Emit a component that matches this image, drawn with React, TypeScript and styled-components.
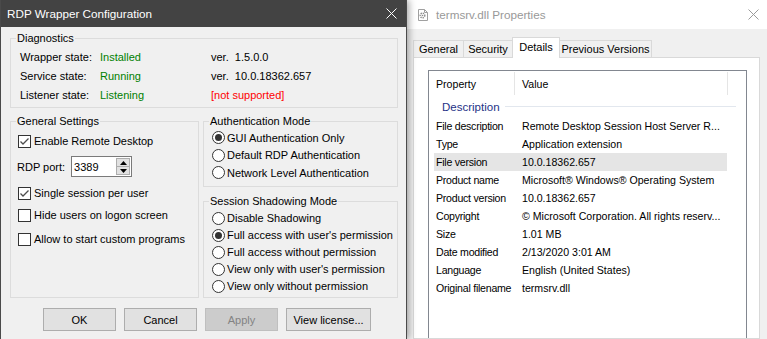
import React from 'react';
import styled, { createGlobalStyle } from 'styled-components';

const GlobalStyle = createGlobalStyle`
    * {
        box-sizing: border-box;
    }
    html,
    body {
        margin: 0;
        padding: 0;
    }
    body {
        background: #f0f0f0;
        font-family: 'Liberation Sans', Arial, sans-serif;
        font-size: 11px;
        color: #000;
        overflow: hidden;
    }
`;

const diagnostics = [
    { label: 'Wrapper state:', state: 'Installed', version: 'ver.  1.5.0.0', bad: false },
    { label: 'Service state:', state: 'Running', version: 'ver.  10.0.18362.657', bad: false },
    { label: 'Listener state:', state: 'Listening', version: '[not supported]', bad: true },
];

const authModes = [
    { label: 'GUI Authentication Only', on: true },
    { label: 'Default RDP Authentication', on: false },
    { label: 'Network Level Authentication', on: false },
];

const shadowModes = [
    { label: 'Disable Shadowing', on: false },
    { label: "Full access with user's permission", on: true },
    { label: 'Full access without permission', on: false },
    { label: "View only with user's permission", on: false },
    { label: 'View only without permission', on: false },
];

const details = [
    { name: 'File description', value: 'Remote Desktop Session Host Server R...' },
    { name: 'Type', value: 'Application extension' },
    { name: 'File version', value: '10.0.18362.657', selected: true },
    { name: 'Product name', value: 'Microsoft® Windows® Operating System' },
    { name: 'Product version', value: '10.0.18362.657' },
    { name: 'Copyright', value: '© Microsoft Corporation. All rights reserv...' },
    { name: 'Size', value: '1.01 MB' },
    { name: 'Date modified', value: '2/13/2020 3:01 AM' },
    { name: 'Language', value: 'English (United States)' },
    { name: 'Original filename', value: 'termsrv.dll' },
];

const tabs = ['General', 'Security', 'Details', 'Previous Versions'];
const tabWidths = [51, 50, 48, 93];

const CloseIcon: React.FC<{ color: string }> = ({ color }) => (
    <svg width="11" height="11" viewBox="0 0 11 11">
        <path d="M0.5 0.5 L10.5 10.5 M10.5 0.5 L0.5 10.5" stroke={color} strokeWidth="1" />
    </svg>
);

const Check: React.FC<{ checked: boolean }> = ({ checked }) => (
    <CheckBox>
        {checked && (
            <svg width="11" height="11" viewBox="0 0 11 11">
                <path d="M1.5 5.5 L4 8 L9.5 2.5" stroke="#4d4d4d" strokeWidth="1.3" fill="none" />
            </svg>
        )}
    </CheckBox>
);

const DllIcon = () => (
    <svg width="12" height="12" viewBox="0 0 12 12">
        <path d="M1.5 0.5 H7.5 L10.5 3.5 V11.5 H1.5 Z" fill="#fff" stroke="#a0a0a0" />
        <path d="M7.5 0.5 V3.5 H10.5" fill="none" stroke="#a0a0a0" />
        <circle cx="5.5" cy="6.5" r="2.3" fill="none" stroke="#8a8a8a" strokeWidth="1.4" strokeDasharray="1.2 0.8" />
        <circle cx="5.5" cy="6.5" r="0.8" fill="#8a8a8a" />
    </svg>
);

export default function App() {
    return (
        <>
            <GlobalStyle />
            <Screen>
                <Dialog>
                    <TitleBar>
                        <span>RDP Wrapper Configuration</span>
                        <CloseIcon color="#fff" />
                    </TitleBar>
                    <DialogBody>
                        <Group>
                            <Legend>Diagnostics</Legend>
                            <DiagGrid>
                                {diagnostics.map((d) => (
                                    <React.Fragment key={d.label}>
                                        <span>{d.label}</span>
                                        <Status>{d.state}</Status>
                                        <Version $bad={d.bad}>{d.version}</Version>
                                    </React.Fragment>
                                ))}
                            </DiagGrid>
                        </Group>
                        <Columns>
                            <SettingsGroup>
                                <Legend>General Settings</Legend>
                                <SettingsBody>
                                    <CheckRow $mt={4}>
                                        <Check checked />
                                        Enable Remote Desktop
                                    </CheckRow>
                                    <PortRow>
                                        <span>RDP port:</span>
                                        <PortInput>
                                            <PortValue>3389</PortValue>
                                            <Spin>
                                                <SpinButton>
                                                    <svg width="7" height="4" viewBox="0 0 7 4">
                                                        <path d="M0 4 L3.5 0 L7 4 Z" fill="#000" />
                                                    </svg>
                                                </SpinButton>
                                                <SpinButton>
                                                    <svg width="7" height="4" viewBox="0 0 7 4">
                                                        <path d="M0 0 L3.5 4 L7 0 Z" fill="#000" />
                                                    </svg>
                                                </SpinButton>
                                            </Spin>
                                        </PortInput>
                                    </PortRow>
                                    <CheckRow $mt={7}>
                                        <Check checked />
                                        Single session per user
                                    </CheckRow>
                                    <CheckRow $mt={4}>
                                        <Check checked={false} />
                                        Hide users on logon screen
                                    </CheckRow>
                                    <CheckRow $mt={6}>
                                        <Check checked={false} />
                                        Allow to start custom programs
                                    </CheckRow>
                                </SettingsBody>
                            </SettingsGroup>
                            <RightColumn>
                                <Group>
                                    <Legend>Authentication Mode</Legend>
                                    <RadioList $pt={1} $pb={4}>
                                        {authModes.map((m) => (
                                            <RadioRow key={m.label} $h={17.5}>
                                                <Radio $on={m.on} />
                                                {m.label}
                                            </RadioRow>
                                        ))}
                                    </RadioList>
                                </Group>
                                <ShadowGroup>
                                    <Legend>Session Shadowing Mode</Legend>
                                    <RadioList $pt={1.5} $pb={2}>
                                        {shadowModes.map((m) => (
                                            <RadioRow key={m.label} $h={17}>
                                                <Radio $on={m.on} />
                                                {m.label}
                                            </RadioRow>
                                        ))}
                                    </RadioList>
                                </ShadowGroup>
                            </RightColumn>
                        </Columns>
                        <ButtonRow>
                            <Button $w={73}>OK</Button>
                            <Button $w={73}>Cancel</Button>
                            <Button $w={73} disabled>
                                Apply
                            </Button>
                            <Button $w={85}>View license...</Button>
                        </ButtonRow>
                    </DialogBody>
                </Dialog>

                <PropWindow>
                    <PropTitle>
                        <TitleLeft>
                            <DllIcon />
                            <span>termsrv.dll Properties</span>
                        </TitleLeft>
                        <CloseIcon color="#9a9a9a" />
                    </PropTitle>
                    <TabStrip>
                        {tabs.map((t, i) => (
                            <Tab key={t} $active={t === 'Details'} style={{ width: tabWidths[i] }}>
                                {t}
                            </Tab>
                        ))}
                    </TabStrip>
                    <TabPanel>
                        <ListView>
                            <ListHeader>
                                <HeaderCell $w={86}>Property</HeaderCell>
                                <HeaderCell $w={213}>Value</HeaderCell>
                            </ListHeader>
                            <GroupHeader>
                                <span>Description</span>
                                <GroupLine />
                            </GroupHeader>
                            {details.map((d) => (
                                <DetailRow key={d.name} $selected={!!d.selected}>
                                    <DetailName>{d.name}</DetailName>
                                    <DetailValue>{d.value}</DetailValue>
                                </DetailRow>
                            ))}
                        </ListView>
                    </TabPanel>
                </PropWindow>
            </Screen>
        </>
    );
}

const Screen = styled.div`
    display: flex;
    width: 767px;
    height: 339px;
    overflow: hidden;
`;

const Dialog = styled.div`
    position: relative;
    z-index: 2;
    flex: 0 0 407px;
    display: flex;
    flex-direction: column;
    background: #f0f0f0;
    border-left: 1px solid #4a4a4a;
    border-right: 1px solid #4a4a4a;
    box-shadow: 2px 0 7px rgba(0, 0, 0, 0.35);
`;

const TitleBar = styled.div`
    height: 27px;
    flex: 0 0 27px;
    background: #434343;
    color: #fff;
    font-size: 11.7px;
    display: flex;
    align-items: center;
    justify-content: space-between;
    padding: 0 9px 0 6px;
`;

const DialogBody = styled.div`
    padding: 4px 8px 0 9px;
    display: flex;
    flex-direction: column;
`;

const Group = styled.fieldset`
    margin: 0;
    padding: 0;
    min-width: 0;
    border: 1px solid #dcdcdc;
`;

const Legend = styled.legend`
    margin-left: 5px;
    padding: 0 1px;
    line-height: 14px;
`;

const DiagGrid = styled.div`
    display: grid;
    grid-template-columns: 80px 111px 1fr;
    grid-auto-rows: 19px;
    align-items: center;
    padding: 2px 0 3px 9px;
    white-space: pre;
`;

const Status = styled.span`
    color: #008000;
`;

const Version = styled.span<{ $bad: boolean }>`
    color: ${(p) => (p.$bad ? '#ff0000' : '#000')};
`;

const Columns = styled.div`
    display: flex;
    gap: 4px;
    margin-top: 6px;
`;

const SettingsGroup = styled(Group)`
    flex: 0 0 189px;
`;

const SettingsBody = styled.div`
    display: flex;
    flex-direction: column;
    padding-left: 7px;
`;

const CheckRow = styled.div<{ $mt: number }>`
    display: flex;
    align-items: center;
    gap: 3px;
    height: 18px;
    margin-top: ${(p) => p.$mt}px;
    white-space: nowrap;
`;

const CheckBox = styled.span`
    width: 13px;
    height: 13px;
    flex: 0 0 13px;
    border: 1px solid #333;
    background: #fff;
    display: flex;
    align-items: center;
    justify-content: center;
`;

const PortRow = styled.div`
    display: flex;
    align-items: center;
    gap: 6px;
    height: 21px;
    margin-top: 6px;
    margin-left: -1px;
`;

const PortInput = styled.div`
    width: 61px;
    height: 21px;
    border: 1px solid #7a7a7a;
    background: #fff;
    display: flex;
    align-items: center;
    padding: 1px 1px 1px 2px;
`;

const PortValue = styled.span`
    flex: 1;
`;

const Spin = styled.div`
    width: 14px;
    height: 17px;
    display: flex;
    flex-direction: column;
    border: 1px solid #adadad;
`;

const SpinButton = styled.div`
    flex: 1;
    background: #e1e1e1;
    display: flex;
    align-items: center;
    justify-content: center;

    & + & {
        border-top: 1px solid #adadad;
    }
`;

const RightColumn = styled.div`
    flex: 1;
    display: flex;
    flex-direction: column;
`;

const ShadowGroup = styled(Group)`
    margin-top: 7.5px;
    flex: 1;
`;

const RadioList = styled.div<{ $pt: number; $pb: number }>`
    display: flex;
    flex-direction: column;
    padding: ${(p) => p.$pt}px 0 ${(p) => p.$pb}px 8px;
`;

const RadioRow = styled.div<{ $h: number }>`
    display: flex;
    align-items: center;
    gap: 2px;
    height: ${(p) => p.$h}px;
    white-space: nowrap;
`;

const Radio = styled.span<{ $on: boolean }>`
    width: 13px;
    height: 13px;
    flex: 0 0 13px;
    border: 1px solid #333;
    border-radius: 50%;
    background: #fff;
    display: flex;
    align-items: center;
    justify-content: center;

    &::after {
        content: '';
        width: 7px;
        height: 7px;
        border-radius: 50%;
        background: ${(p) => (p.$on ? '#333' : 'transparent')};
    }
`;

const ButtonRow = styled.div`
    display: flex;
    gap: 8px;
    margin-top: 10.5px;
    padding-left: 33px;
`;

const Button = styled.button<{ $w: number }>`
    width: ${(p) => p.$w}px;
    height: 23px;
    border: 1px solid #adadad;
    background: #e1e1e1;
    font-family: inherit;
    font-size: 11px;
    color: #000;
    padding: 0;

    &:disabled {
        background: #cccccc;
        border-color: #bfbfbf;
        color: #838383;
    }
`;

const PropWindow = styled.div`
    flex: 1;
    min-width: 0;
    display: flex;
    flex-direction: column;
    background: #f0f0f0;
`;

const PropTitle = styled.div`
    height: 29px;
    flex: 0 0 29px;
    background: #fff;
    display: flex;
    align-items: center;
    justify-content: space-between;
    padding: 0 8px 0 10px;
    color: #999;
    font-size: 11.7px;
`;

const TitleLeft = styled.div`
    display: flex;
    align-items: center;
    gap: 7px;
`;

const TabStrip = styled.div`
    display: flex;
    align-items: flex-end;
    height: 20px;
    margin-top: 8px;
    padding-left: 6px;
`;

const Tab = styled.div<{ $active: boolean }>`
    position: relative;
    z-index: ${(p) => (p.$active ? 1 : 0)};
    height: ${(p) => (p.$active ? 21 : 17)}px;
    margin-bottom: ${(p) => (p.$active ? -1 : 0)}px;
    margin-right: -1px;
    border: 1px solid #d9d9d9;
    border-bottom: none;
    background: ${(p) => (p.$active ? '#fff' : '#f0f0f0')};
    display: flex;
    align-items: center;
    justify-content: center;
    padding-bottom: ${(p) => (p.$active ? 2 : 0)}px;
    white-space: nowrap;
`;

const TabPanel = styled.div`
    flex: 1;
    display: flex;
    flex-direction: column;
    margin-right: 7px;
    margin-left: 6px;
    background: #fff;
    border: 1px solid #d9d9d9;
    padding: 12px 12px 0 14px;
`;

const ListView = styled.div`
    flex: 1;
    border: 1px solid #828790;
    border-bottom: none;
    background: #fff;
    font-size: 10.6px;
`;

const ListHeader = styled.div`
    display: flex;
    height: 25px;
`;

const HeaderCell = styled.div<{ $w: number }>`
    width: ${(p) => p.$w}px;
    display: flex;
    align-items: center;
    padding-left: 7px;
    border-right: 1px solid #e5e5e5;
    margin: 1px 0;
`;

const GroupHeader = styled.div`
    display: flex;
    align-items: center;
    height: 21px;
    padding: 0 10px 0 13px;
    color: #1e3287;
    font-size: 11.5px;
`;

const GroupLine = styled.div`
    flex: 1;
    height: 1px;
    margin-left: 5px;
    background: #e2e7ee;
`;

const DetailRow = styled.div<{ $selected: boolean }>`
    display: grid;
    grid-template-columns: 80px 213px;
    width: 293px;
    height: 18px;
    margin-left: 5px;
    align-items: center;
    background: ${(p) => (p.$selected ? '#e5e5e5' : 'transparent')};
    white-space: nowrap;
`;

const DetailName = styled.span`
    padding-left: 2px;
    letter-spacing: -0.25px;
`;

const DetailValue = styled.span`
    padding-left: 8px;
    overflow: hidden;
`;
